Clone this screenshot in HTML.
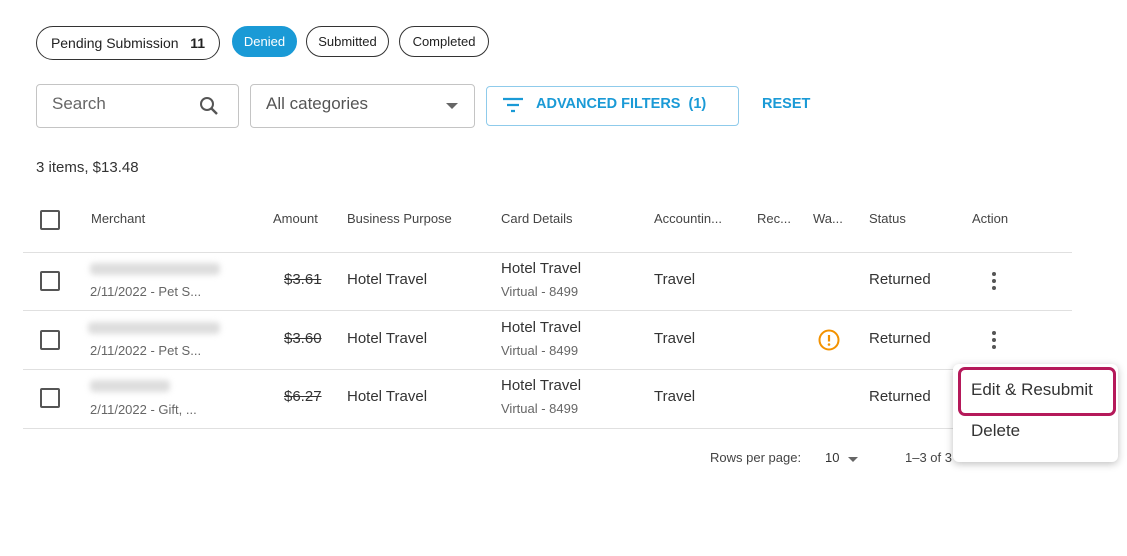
<!DOCTYPE html>
<html><head><style>
*{box-sizing:border-box;margin:0;padding:0}
body{width:1127px;height:556px;background:#fff;font-family:"Liberation Sans",sans-serif;color:#333;position:relative;overflow:hidden}
.a{position:absolute;white-space:nowrap}
.chip{position:absolute;border:1px solid #333;border-radius:18px;font-size:13px;display:flex;align-items:center;justify-content:center;color:#222}
.box{position:absolute;border:1px solid #c4c4c4;border-radius:4px}
.cb{position:absolute;width:20px;height:20px;border:2px solid #555;border-radius:2px}
.line{position:absolute;left:23px;width:1049px;height:1px;background:#e0e0e0}
.t{font-size:15px;color:#333}
.s{font-size:13px;color:#666}
.h{font-size:13px;color:#444}
.blur{position:absolute;height:12px;background:#ddd;filter:blur(3px);border-radius:4px}
.dots{position:absolute;width:4px}
.dots i{display:block;width:4px;height:4px;border-radius:2px;background:#555;margin-bottom:3px}
</style></head><body>
<div class="chip" style="left:36px;top:26px;width:184px;height:34px;font-size:14px">Pending Submission&nbsp;&nbsp;&nbsp;<b>11</b></div>
<div class="chip" style="left:232px;top:26px;width:65px;height:31px;background:#1a9ad6;border-color:#1a9ad6;color:#fff">Denied</div>
<div class="chip" style="left:306px;top:26px;width:83px;height:31px">Submitted</div>
<div class="chip" style="left:399px;top:26px;width:90px;height:31px">Completed</div>

<div class="box" style="left:36px;top:84px;width:203px;height:44px"></div>
<div class="a" style="left:52px;top:94px;font-size:17px;color:#666">Search</div>
<svg class="a" style="left:198px;top:95px" width="22" height="22" viewBox="0 0 22 22"><circle cx="9" cy="9" r="6" fill="none" stroke="#555" stroke-width="2"/><path d="M13.5 13.5L19 19" stroke="#555" stroke-width="2.4"/></svg>
<div class="box" style="left:250px;top:84px;width:225px;height:44px"></div>
<div class="a" style="left:266px;top:94px;font-size:17px;color:#555">All categories</div>
<div class="a" style="left:446px;top:103px;width:0;height:0;border-left:6px solid transparent;border-right:6px solid transparent;border-top:6px solid #666"></div>
<div class="box" style="left:486px;top:86px;width:253px;height:40px;border-color:#8fcbeb"></div>
<svg class="a" style="left:503px;top:97px" width="20" height="16"><path d="M0 2h20M4 8h12M8 14h4" stroke="#1a9ad6" stroke-width="2.2"/></svg>
<div class="a" style="left:536px;top:96px;font-size:14.5px;font-weight:bold;color:#1a9ad6">ADVANCED FILTERS&nbsp;&nbsp;(1)</div>
<div class="a" style="left:762px;top:96px;font-size:14.5px;font-weight:bold;color:#1a9ad6">RESET</div>

<div class="a t" style="left:36px;top:159px">3 items, $13.48</div>

<div class="cb" style="left:40px;top:210px"></div>
<div class="a h" style="left:91px;top:211px">Merchant</div>
<div class="a h" style="left:273px;top:211px">Amount</div>
<div class="a h" style="left:347px;top:211px">Business Purpose</div>
<div class="a h" style="left:501px;top:211px">Card Details</div>
<div class="a h" style="left:654px;top:211px">Accountin...</div>
<div class="a h" style="left:757px;top:211px">Rec...</div>
<div class="a h" style="left:813px;top:211px">Wa...</div>
<div class="a h" style="left:869px;top:211px">Status</div>
<div class="a h" style="left:972px;top:211px">Action</div>
<div class="line" style="top:252px"></div>

<!-- row1 -->
<div class="cb" style="left:40px;top:271px"></div>
<div class="blur" style="left:90px;top:263px;width:130px"></div>
<div class="a s" style="left:90px;top:284px">2/11/2022 - Pet S...</div>
<div class="a t" style="left:284px;top:271px;text-decoration:line-through">$3.61</div>
<div class="a t" style="left:347px;top:271px">Hotel Travel</div>
<div class="a t" style="left:501px;top:260px">Hotel Travel</div>
<div class="a s" style="left:501px;top:284px">Virtual - 8499</div>
<div class="a t" style="left:654px;top:271px">Travel</div>
<div class="a t" style="left:869px;top:271px">Returned</div>
<div class="dots" style="left:992px;top:272px"><i></i><i></i><i></i></div>
<div class="line" style="top:310px"></div>

<!-- row2 -->
<div class="cb" style="left:40px;top:330px"></div>
<div class="blur" style="left:88px;top:322px;width:132px"></div>
<div class="a s" style="left:90px;top:343px">2/11/2022 - Pet S...</div>
<div class="a t" style="left:284px;top:330px;text-decoration:line-through">$3.60</div>
<div class="a t" style="left:347px;top:330px">Hotel Travel</div>
<div class="a t" style="left:501px;top:319px">Hotel Travel</div>
<div class="a s" style="left:501px;top:343px">Virtual - 8499</div>
<div class="a t" style="left:654px;top:330px">Travel</div>
<svg class="a" style="left:818px;top:329px" width="22" height="22"><circle cx="11" cy="11" r="9.5" fill="none" stroke="#f39200" stroke-width="2"/><path d="M11 6v6.5" stroke="#f39200" stroke-width="2.2"/><circle cx="11" cy="15.5" r="1.3" fill="#f39200"/></svg>
<div class="a t" style="left:869px;top:330px">Returned</div>
<div class="dots" style="left:992px;top:331px"><i></i><i></i><i></i></div>
<div class="line" style="top:369px"></div>

<!-- row3 -->
<div class="cb" style="left:40px;top:388px"></div>
<div class="blur" style="left:90px;top:380px;width:80px"></div>
<div class="a s" style="left:90px;top:402px">2/11/2022 - Gift, ...</div>
<div class="a t" style="left:284px;top:388px;text-decoration:line-through">$6.27</div>
<div class="a t" style="left:347px;top:388px">Hotel Travel</div>
<div class="a t" style="left:501px;top:377px">Hotel Travel</div>
<div class="a s" style="left:501px;top:401px">Virtual - 8499</div>
<div class="a t" style="left:654px;top:388px">Travel</div>
<div class="a t" style="left:869px;top:388px">Returned</div>
<div class="line" style="top:428px"></div>

<div class="a" style="left:710px;top:450px;font-size:13px;color:#444">Rows per page:</div>
<div class="a" style="left:825px;top:450px;font-size:13px;color:#333">10</div>
<div class="a" style="left:848px;top:457px;border-left:5px solid transparent;border-right:5px solid transparent;border-top:5px solid #666"></div>
<div class="a" style="left:905px;top:450px;font-size:13px;color:#444">1–3 of 3</div>

<div class="a" style="left:953px;top:364px;width:165px;height:98px;background:#fff;border-radius:6px;box-shadow:0 2px 8px rgba(0,0,0,.25)"></div>
<div class="a" style="left:958px;top:367px;width:158px;height:49px;border:3px solid #b5195a;border-radius:7px"></div>
<div class="a" style="left:971px;top:380px;font-size:17px;color:#333">Edit &amp; Resubmit</div>
<div class="a" style="left:971px;top:421px;font-size:17px;color:#333">Delete</div>
</body></html>
